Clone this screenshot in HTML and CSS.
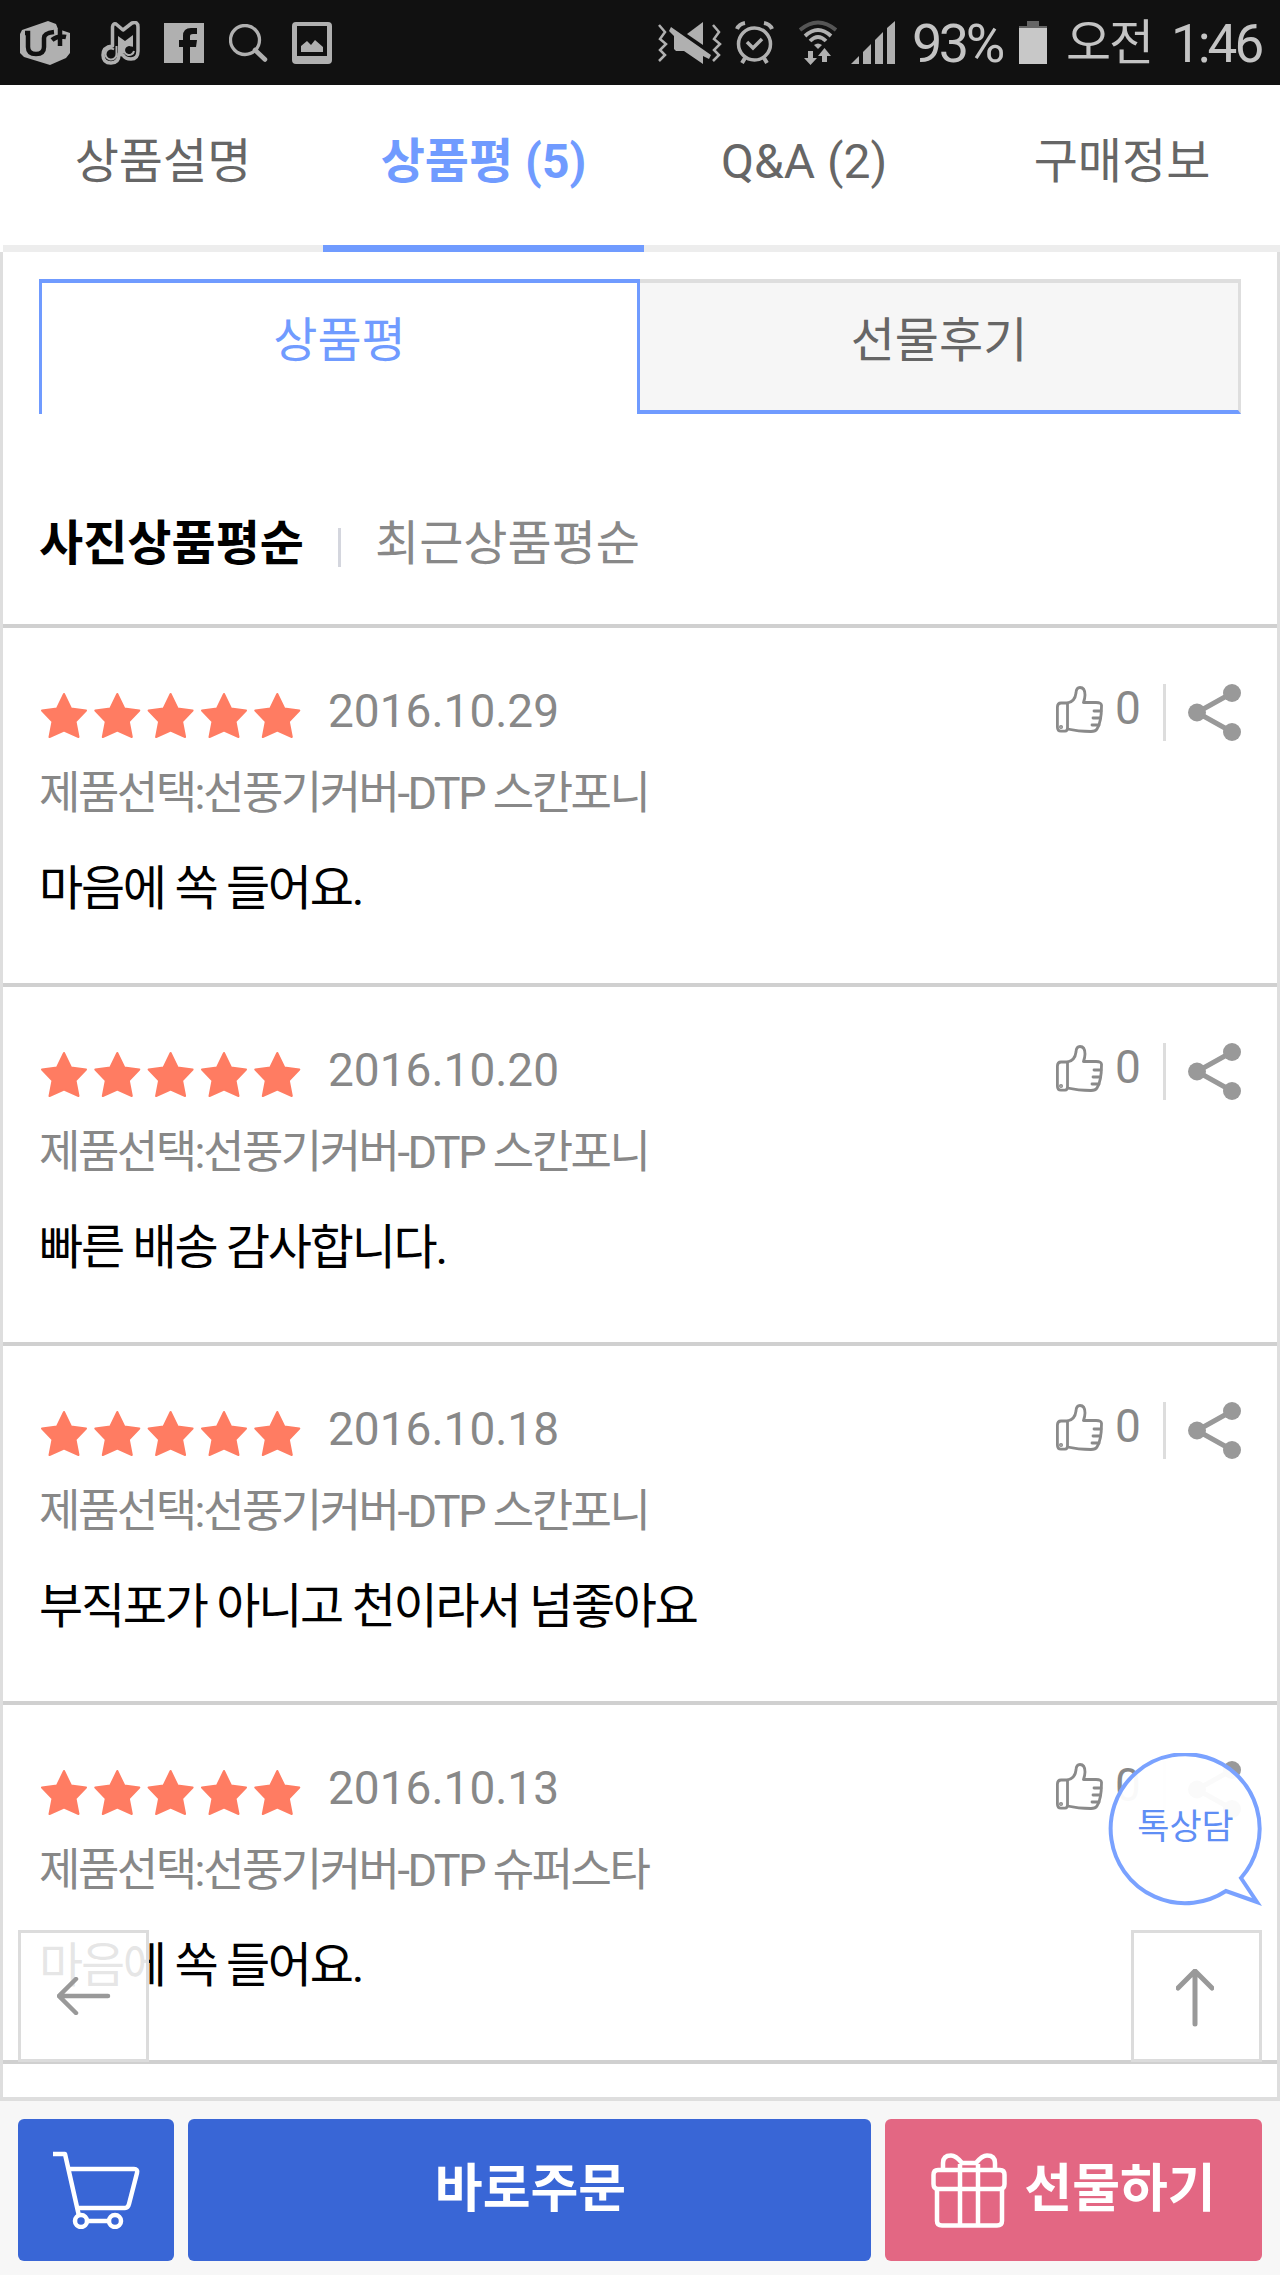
FILE: index.html
```html
<!DOCTYPE html>
<html lang="ko">
<head>
<meta charset="utf-8">
<title>상품평</title>
<link rel="stylesheet" href="styles.css">
</head>
<body>
<svg class="defs" aria-hidden="true">
  <symbol id="stars" viewBox="0 0 262 48">
    <g fill="#ff7c62" stroke="#ff7c62" stroke-width="2" stroke-linejoin="round">
      <path id="star" d="M24 3L31 17.5L46 19.5L35.5 30.5L38.5 46L24 39.500L9.500 46L12.500 30.500L2 19.500L17 17.500Z"/>
      <use href="#star" x="53.300"/><use href="#star" x="106.600"/><use href="#star" x="160"/><use href="#star" x="213.300"/>
    </g>
  </symbol>
  <symbol id="thumb" viewBox="0 0 47 47">
    <g fill="none" stroke="#8a8a8a" stroke-width="2.800" stroke-linejoin="round" stroke-linecap="round">
      <path d="M11.500 17H5Q1.400 17 1.400 21V41Q1.400 45.200 5 45.200H9Q11.500 45 11.500 42Z"/>
      <path d="M11.500 17Q19 15.500 20 7Q20.300 1.500 24 1.500Q29 1.500 29 9Q29 12 27.500 16.500H40Q46 16.500 45.500 20Q45.500 36 41 43Q39.500 45.500 35 45.500Q22 45.500 11.500 43"/>
      <path d="M38 25H45M37 32H44.500M36 39H43"/>
      <circle cx="5" cy="41" r="1.300" stroke-width="1.500"/>
    </g>
  </symbol>
  <symbol id="share" viewBox="0 0 53 57">
    <path d="M44 9L9 28.500L44 48" fill="none" stroke="#999" stroke-width="5"/>
    <circle cx="44" cy="9" r="9" fill="#999"/><circle cx="9" cy="28.500" r="9" fill="#999"/><circle cx="44" cy="48" r="9" fill="#999"/>
  </symbol>
</svg>
<div class="screen">
  <header class="status">
    <div class="status-left">
      <svg class="i-carrier" width="50" height="44" viewBox="0 0 50 44"><path fill="#b0b0b0" d="M2 9L28 0L36 3L38 8L50 12V32L46 37L30 44L4 36L0 32V13Z"/><path d="M5 12H8V26Q8 33 16 33Q24 33 24 26V17Q24 12 34 11M40 8V25M32 19Q38 14 46 16" fill="none" stroke="#111" stroke-width="4.500"/></svg>
      <svg class="i-music" width="39" height="44" viewBox="0 0 39 44"><path d="M11.500 25V6Q12 2 15 3L22 9L31 2Q37 0 37 6V30Q37 38 30 38Q24 38 22 34L18 33Q18 42 10 42Q2 42 2 34Q2 26 11.500 25Z" fill="#111" stroke="#b0b0b0" stroke-width="3.500" stroke-linejoin="round"/><path d="M17 15L24 20L32 14V26Q26 24 24 32H17Z" fill="#b0b0b0"/><path d="M13 28.500A5.500 5.500 0 1 0 15.500 33V25M31 25A5 5 0 1 0 33 30" fill="#111" stroke="#b0b0b0" stroke-width="2"/></svg>
      <svg class="i-fb" width="40" height="40" viewBox="0 0 40 40"><path fill="#b0b0b0" d="M0 0H40V40H26V24H32L33 17H26V13Q26 11 29 11H33V5H27Q19 5 19 13V17H15V24H19V40H0Z"/></svg>
      <svg class="i-search" width="39" height="38" viewBox="0 0 39 38"><circle cx="16" cy="16" r="14.500" fill="none" stroke="#b0b0b0" stroke-width="3.300"/><path d="M26 26L36 35.500" stroke="#b0b0b0" stroke-width="4.500" stroke-linecap="round"/></svg>
      <svg class="i-image" width="40" height="42" viewBox="0 0 40 42"><path fill="#b0b0b0" fill-rule="evenodd" d="M4 0H36Q40 0 40 4V38Q40 42 36 42H4Q0 42 0 38V4Q0 0 4 0ZM5 4V34H35V4ZM9 30V24L15 19L19 23L23 18L31 25V30Z"/></svg>
    </div>
    <div class="status-right">
      <svg class="i-mute" width="65" height="44" viewBox="0 0 65 44"><g fill="#b0b0b0"><path d="M29 13L45 1V24Z"/><path d="M13 6L53 34L51 38L45 35V43L26 30H18L16 28V15L11 10Z"/></g><path d="M1 4L7 11L2 18L8 23L2 29L7 34L1 40M55 4L61 11L56 18L62 23L56 29L61 34L55 40" fill="none" stroke="#b0b0b0" stroke-width="2.500"/></svg>
      <svg class="i-alarm" width="39" height="43" viewBox="0 0 39 43"><g fill="none" stroke="#b0b0b0"><circle cx="19.500" cy="23" r="16" stroke-width="3.500"/><path d="M12 21L18 27L27 18" stroke-width="3.500"/><path d="M2 8Q4 3 10 2M37 8Q35 3 29 2" stroke-width="4"/><path d="M10 37L7 42M29 37L32 42" stroke-width="4"/></g></svg>
      <svg class="i-wifi" width="38" height="45" viewBox="0 0 38 45"><g fill="none" stroke="#b0b0b0" stroke-width="3.800"><path stroke="#555" d="M1 10Q19 -5 37 10"/><path d="M6 16Q19 4 32 16M11 21Q19 13 27 21"/></g><path fill="#b0b0b0" d="M15 25Q19 22 23 25L19 29ZM9 31H14V38H18L11.500 45L5 38H9ZM23 42H28V36H32L25.500 28L19 36H23Z"/></svg>
      <svg class="i-signal" width="44" height="43" viewBox="0 0 44 43"><path fill="#b0b0b0" d="M0 43L8 35V43ZM12 31L20 23V43H12ZM24 19L32 11V43H24ZM36 7L44 0V43H36Z"/></svg>
      <span class="percent">93%</span>
      <svg class="i-battery" width="28" height="43" viewBox="0 0 28 43"><path fill="#666" d="M8 0H20V5H28V7H0V5H8Z"/><path fill="#c8c8c8" d="M0 7H28V43H0Z"/></svg>
      <span class="ampm">오전</span>
      <span class="clock">1:46</span>
    </div>
  </header>

  <nav class="tabs">
    <a class="tab">상품설명</a>
    <a class="tab tab-on">상품평 (5)</a>
    <a class="tab">Q&amp;A (2)</a>
    <a class="tab">구매정보</a>
  </nav>

  <main class="content">
    <div class="subtabs">
      <a class="subtab subtab-on">상품평</a>
      <a class="subtab">선물후기</a>
    </div>
    <div class="sort">
      <span class="sort-on">사진상품평순</span>
      <i class="sort-bar"></i>
      <span class="sort-off">최근상품평순</span>
    </div>
    <ul class="reviews">
      <li class="review">
        <div class="meta"><svg class="stars"><use href="#stars"/></svg><span class="date">2016.10.29</span><svg class="thumb"><use href="#thumb"/></svg><span class="likes">0</span><i class="meta-bar"></i><svg class="share"><use href="#share"/></svg></div>
        <p class="option">제품선택:선풍기커버-DTP 스칸포니</p>
        <p class="text">마음에 쏙 들어요.</p>
      </li>
      <li class="review">
        <div class="meta"><svg class="stars"><use href="#stars"/></svg><span class="date">2016.10.20</span><svg class="thumb"><use href="#thumb"/></svg><span class="likes">0</span><i class="meta-bar"></i><svg class="share"><use href="#share"/></svg></div>
        <p class="option">제품선택:선풍기커버-DTP 스칸포니</p>
        <p class="text">빠른 배송 감사합니다.</p>
      </li>
      <li class="review">
        <div class="meta"><svg class="stars"><use href="#stars"/></svg><span class="date">2016.10.18</span><svg class="thumb"><use href="#thumb"/></svg><span class="likes">0</span><i class="meta-bar"></i><svg class="share"><use href="#share"/></svg></div>
        <p class="option">제품선택:선풍기커버-DTP 스칸포니</p>
        <p class="text">부직포가 아니고 천이라서 넘좋아요</p>
      </li>
      <li class="review">
        <div class="meta"><svg class="stars"><use href="#stars"/></svg><span class="date">2016.10.13</span><svg class="thumb"><use href="#thumb"/></svg><span class="likes">0</span><i class="meta-bar"></i><svg class="share"><use href="#share"/></svg></div>
        <p class="option">제품선택:선풍기커버-DTP 슈퍼스타</p>
        <p class="text">마음에 쏙 들어요.</p>
      </li>
    </ul>
  </main>

  <footer class="actions">
    <a class="btn btn-cart"><svg width="88" height="78" viewBox="0 0 88 78"><g fill="none" stroke="#fff" stroke-width="4.500" stroke-linejoin="round"><path d="M1 3H13L27 65M18 18H82Q86 18 85 22L77 53Q76 57 73 57H25M35 70H57"/><circle cx="29" cy="70" r="6"/><circle cx="63" cy="70" r="6"/></g></svg></a>
    <a class="btn btn-order">바로주문</a>
    <a class="btn btn-gift"><svg width="76" height="75" viewBox="0 0 76 75"><g fill="none" stroke="#fff" stroke-width="4.500" stroke-linejoin="round"><path d="M7 17H69Q73.500 17 73.500 22V31Q73.500 36 69 36H7Q2.500 36 2.500 31V22Q2.500 17 7 17Z"/><path d="M6 36V68Q6 72.500 11 72.500H66Q71 72.500 71 68V36M29 73V11M47 73V11M29 10H47M12 17V10Q12 2.500 20 2.500Q25 2.500 31 10M64 17V10Q64 2.500 56 2.500Q51 2.500 45 10"/></g></svg><span>선물하기</span></a>
  </footer>

  <a class="talk"><svg width="155" height="155" viewBox="0 0 155 155"><path d="M133 125A74.500 74.500 0 1 0 118 138L149 149Z" fill="#fff" fill-opacity=".95" stroke="#7aa2ff" stroke-width="4"/></svg><span>톡상담</span></a>
  <a class="float float-back"><svg width="54" height="38" viewBox="0 0 54 38"><path d="M51 19H3M19 2L2 19L19 36" fill="none" stroke="#999" stroke-width="4.500" stroke-linecap="round"/></svg></a>
  <a class="float float-top"><svg width="38" height="58" viewBox="0 0 38 58"><path d="M19 55V3M2 19L19 2L36 19" fill="none" stroke="#999" stroke-width="5" stroke-linecap="round"/></svg></a>
</div>
</body>
</html>
```

FILE: styles.css
```css
* { box-sizing: border-box; }
body { margin: 0; background: #fff; }
p, ul { margin: 0; padding: 0; list-style: none; }
svg { display: block; flex: none; }
.defs { position: absolute; width: 0; height: 0; }

.screen {
  position: relative;
  width: 1280px;
  height: 2275px;
  display: flex;
  flex-direction: column;
  overflow: hidden;
  font-family: Roboto, "Noto Sans CJK KR", sans-serif;
  font-size: 48px;
  line-height: 60px;
  color: #000;
  white-space: nowrap;
}

/* Status bar */
.status {
  height: 85px;
  flex: none;
  padding: 0 16px 0 20px;
  display: flex;
  justify-content: space-between;
  align-items: center;
  background: #111;
  color: #c4c4c4;
}
.status-left, .status-right { display: flex; align-items: center; }
.i-music { margin-left: 31px; }
.i-fb { margin-left: 24px; }
.i-search { margin-left: 25px; }
.i-image { margin-left: 24px; }
.i-alarm { margin-left: 12px; }
.i-wifi { margin-left: 25px; }
.i-signal { margin-left: 14px; }
.percent { width: 95px; margin: 2px 0 0 17px; font-size: 54px; letter-spacing: -3.500px; }
.i-battery { margin-left: 12px; }
.ampm { width: 84px; margin: 3px 0 0 19px; font-size: 49px; letter-spacing: -2px; }
.clock { width: 93px; margin: 3px 0 0 21px; font-size: 53px; letter-spacing: -3px; }

/* Product tabs */
.tabs {
  height: 167px;
  flex: none;
  padding-left: 3px;
  display: grid;
  grid-template-columns: 320px 321px 320px 1fr;
}
.tab {
  padding-top: 47px;
  border-bottom: 7px solid #ededed;
  color: #666;
  text-align: center;
}
.tab-on { color: #709bff; border-color: #709bff; font-weight: 700; }

/* Content */
.content {
  height: 1849px;
  flex: none;
  padding-top: 27px;
  border: solid #dedede;
  border-width: 0 3px 4px;
}
.subtabs { height: 135px; margin: 0 36px; display: grid; grid-template-columns: 1fr 1fr; }
.subtab {
  padding-top: 28px;
  text-align: center;
  background: #f6f6f6;
  color: #666;
  border: solid #dedede;
  border-width: 4px 3px 4px 0;
  border-bottom-color: #709bff;
}
.subtab-on { background: #fff; color: #709bff; border-color: #709bff; border-width: 4px 3px 0; }
.sort { height: 210px; padding: 100px 36px 0; display: flex; }
.sort-on { width: 266px; font-weight: 700; }
.sort-bar { width: 3px; height: 39px; margin: 14px 34px 0 33px; background: #d4d6de; }
.sort-off { color: #888; }

.reviews { border-top: 4px solid #d0d0d0; }
.review { height: 359px; padding: 56px 36px 0; border-bottom: 4px solid #d0d0d0; }
.meta { height: 60px; display: flex; align-items: flex-start; color: #888; }
.stars { width: 262px; height: 48px; margin: 7px 0 0 1px; }
.date { width: 232px; margin: -3px 0 0 26px; font-size: 46px; }
.thumb { width: 47px; height: 47px; margin: 2px 0 0 auto; }
.likes { width: 27px; margin: -6px 0 0 12px; font-size: 46px; }
.meta-bar { width: 3px; height: 57px; margin-left: 21px; background: #ddd; }
.share { width: 53px; height: 57px; margin-left: 22px; }
.option { margin-top: 20px; height: 60px; font-size: 45px; letter-spacing: -2.500px; color: #888; }
.text { margin-top: 35px; letter-spacing: -2.250px; }

/* Bottom actions */
.actions {
  flex: 1;
  padding: 18px 18px 14px;
  display: grid;
  grid-template-columns: 156px 683px 377px;
  gap: 14px;
  background: #f7f7f7;
}
.btn {
  display: flex;
  align-items: center;
  justify-content: center;
  border-radius: 6px;
  color: #fff;
  font-size: 52px;
  font-weight: 700;
}
.btn-cart, .btn-order { background: #3966d6; }
.btn-order { padding-left: 2px; }
.btn-gift { background: #e36783; gap: 17px; }

/* Buttons floating over the list */
.float {
  position: absolute;
  top: 1930px;
  width: 131px;
  height: 132px;
  display: flex;
  align-items: center;
  justify-content: center;
  background: rgba(255, 255, 255, .9);
  border: 3px solid #dcdcdc;
}
.float-back { left: 18px; }
.float-top { left: 1131px; padding: 4px 3px 0 0; }
.talk { position: absolute; left: 1108px; top: 1753px; width: 155px; height: 155px; }
.talk span { position: absolute; left: 0; top: 45px; width: 155px; text-align: center; font-size: 35px; color: #5f8ef5; }
```
